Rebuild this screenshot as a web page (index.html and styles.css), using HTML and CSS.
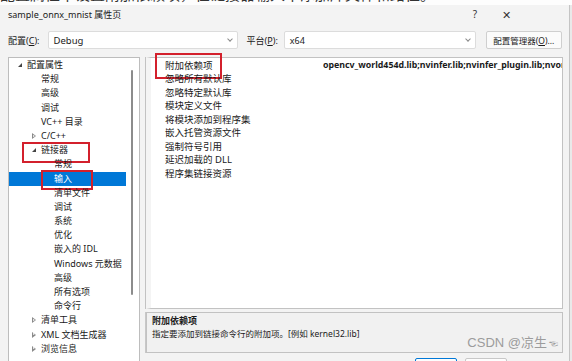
FILE: index.html
```html
<!DOCTYPE html>
<html lang="zh-CN">
<head>
  <meta charset="UTF-8">
  <title>sample_onnx_mnist 属性页</title>
  <link rel="stylesheet" href="styles.css">
</head>
<body>
  <div class="cut"><p>配置属性中设置附加依赖项，在链接器输入中添加库文件和路径。</p></div>

  <div class="dialog">
    <div class="titlebar">
      <span class="title">sample_onnx_mnist 属性页</span>
      <span class="ctrl help">?</span>
      <span class="ctrl close">✕</span>
    </div>

    <div class="config">
      <span class="label">配置(<u>C</u>):</span>
      <div class="select cfg">Debug<span class="chev"></span></div>
      <span class="label">平台(<u>P</u>):</span>
      <div class="select plat">x64<span class="chev"></span></div>
      <button class="mgr">配置管理器(<u>O</u>)...</button>
    </div>

    <div class="main">
      <div class="tree">
        <ul class="items">
          <li class="l0"><span class="arr open"></span>配置属性</li>
          <li class="l1"><span class="arr"></span>常规</li>
          <li class="l1"><span class="arr"></span>高级</li>
          <li class="l1"><span class="arr"></span>调试</li>
          <li class="l1"><span class="arr"></span>VC++ 目录</li>
          <li class="l1"><span class="arr shut"></span>C/C++</li>
          <li class="l1 mark"><span class="arr open"></span>链接器</li>
          <li class="l2"><span class="arr"></span>常规</li>
          <li class="l2 sel mark"><span class="arr"></span>输入</li>
          <li class="l2"><span class="arr"></span>清单文件</li>
          <li class="l2"><span class="arr"></span>调试</li>
          <li class="l2"><span class="arr"></span>系统</li>
          <li class="l2"><span class="arr"></span>优化</li>
          <li class="l2"><span class="arr"></span>嵌入的 IDL</li>
          <li class="l2"><span class="arr"></span>Windows 元数据</li>
          <li class="l2"><span class="arr"></span>高级</li>
          <li class="l2"><span class="arr"></span>所有选项</li>
          <li class="l2"><span class="arr"></span>命令行</li>
          <li class="l1"><span class="arr shut"></span>清单工具</li>
          <li class="l1"><span class="arr shut"></span>XML 文档生成器</li>
          <li class="l1"><span class="arr shut"></span>浏览信息</li>
        </ul>
        <div class="scroll"><div class="thumb"></div></div>
      </div>

      <div class="right">
        <div class="grid">
          <div class="prop mark"><span class="name">附加依赖项</span><span class="val">opencv_world454d.lib;nvinfer.lib;nvinfer_plugin.lib;nvonnxparser.lib;cudart.lib</span></div>
          <div class="prop"><span class="name">忽略所有默认库</span></div>
          <div class="prop"><span class="name">忽略特定默认库</span></div>
          <div class="prop"><span class="name">模块定义文件</span></div>
          <div class="prop"><span class="name">将模块添加到程序集</span></div>
          <div class="prop"><span class="name">嵌入托管资源文件</span></div>
          <div class="prop"><span class="name">强制符号引用</span></div>
          <div class="prop"><span class="name">延迟加载的 DLL</span></div>
          <div class="prop"><span class="name">程序集链接资源</span></div>
        </div>

        <div class="desc">
          <div class="desc-title">附加依赖项</div>
          <div class="desc-text">指定要添加到链接命令行的附加项。[例如 kernel32.lib]</div>
          <div class="watermark">CSDN @凉生<span class="wm-icon">☜</span></div>
        </div>

        <div class="buttons">
          <button class="btn ok" aria-label="确定"></button>
          <button class="btn" aria-label="取消"></button>
        </div>
      </div>
    </div>
  </div>
</body>
</html>
```

FILE: styles.css
```css
* {
  box-sizing: border-box;
}

body {
  margin: 0;
  background: #e9e9e9;
  font-family: "Noto Sans", "Noto Sans CJK SC", sans-serif;
  font-size: 9px;
  color: #1a1a1a;
  width: 572px;
  height: 361px;
  overflow: hidden;
}

.cut {
  height: 5px;
  overflow: hidden;
  background: #fdfdfd;
}

.cut p {
  margin: -13px 0 0 0;
  font-size: 15px;
  line-height: 15px;
  color: #333;
  white-space: nowrap;
}

.dialog {
  width: 570px;
  height: 356px;
  background: #f3f3f3;
  border-right: 1px solid #c4c4c4;
  overflow: hidden;
}

.titlebar {
  height: 18px;
  display: flex;
  align-items: center;
  padding-left: 8px;
}

.title {
  flex: 1;
  font-size: 9px;
}

.ctrl {
  width: 28px;
  text-align: center;
  font-size: 10px;
  color: #333;
}

.help {
  margin-right: 1px;
}

.close {
  margin-right: 47px;
  font-size: 11px;
  width: 32px;
}

u {
  text-decoration-thickness: 1px;
  text-underline-offset: 1px;
}

.config {
  display: flex;
  align-items: center;
  height: 18px;
  margin-top: 8px;
  padding-left: 8px;
}

.label {
  font-size: 9px;
}

.select {
  position: relative;
  height: 18px;
  background: #fff;
  border: 1px solid #dcdcdc;
  border-radius: 2px;
  display: flex;
  align-items: center;
  padding-left: 5px;
  font-size: 9.5px;
}

.cfg {
  width: 190px;
  margin-left: 8px;
  margin-right: 9px;
}

.plat {
  width: 192px;
  margin-left: 6px;
  margin-right: 10px;
  font-size: 9px;
}

.chev {
  position: absolute;
  right: 5px;
  top: 5px;
  width: 4px;
  height: 4px;
  border-right: 1px solid #8a8a8a;
  border-bottom: 1px solid #8a8a8a;
  transform: rotate(45deg);
}

.mgr {
  width: 76px;
  height: 18px;
  border: 1px solid #cfcfcf;
  border-radius: 2px;
  background: #fbfbfb;
  font-family: inherit;
  font-size: 8.5px;
  padding: 0;
  color: #1a1a1a;
}

.main {
  display: flex;
  margin-top: 8px;
  padding-left: 8px;
  gap: 6px;
}

.tree {
  width: 132px;
  height: 310px;
  background: #fff;
  border: 1px solid #bdbdbd;
  display: flex;
}

.items {
  list-style: none;
  margin: 0;
  padding: 0;
  width: 117px;
}

.items li {
  position: relative;
  height: 14.2px;
  line-height: 14.2px;
  display: flex;
  align-items: center;
  white-space: nowrap;
  font-size: 9px;
}

.l0 {
  padding-left: 8px;
}

.l1 {
  padding-left: 22px;
}

.l2 {
  padding-left: 35px;
}

.arr {
  width: 10px;
  height: 14px;
  flex: none;
  position: relative;
}

.arr.open::before {
  content: "";
  position: absolute;
  left: 1px;
  top: 5px;
  border-left: 4px solid transparent;
  border-bottom: 4px solid #444;
}

.arr.shut::before {
  content: "";
  position: absolute;
  left: 1px;
  top: 4px;
  border-top: 3px solid transparent;
  border-bottom: 3px solid transparent;
  border-left: 4px solid #8a8a8a;
}

.arr.shut::after {
  content: "";
  position: absolute;
  left: 1.5px;
  top: 5.5px;
  border-top: 1.5px solid transparent;
  border-bottom: 1.5px solid transparent;
  border-left: 2px solid #fff;
}

.sel {
  background: #0078d7;
  color: #fff;
}

.mark::after {
  content: "";
  position: absolute;
  border: 2px solid #d3202c;
  pointer-events: none;
}

.l1.mark::after {
  left: 13px;
  top: -1px;
  width: 64px;
  height: 17px;
}

.l2.sel.mark::after {
  left: 32px;
  top: -2px;
  width: 48px;
  height: 16px;
}

.scroll {
  flex: 1;
}

.thumb {
  margin-top: 12px;
  margin-left: 5px;
  width: 2px;
  height: 225px;
  background: #8c8c8c;
  border-radius: 1px;
}

.right {
  width: 417px;
  display: flex;
  flex-direction: column;
}

.grid {
  height: 252px;
  background: #fff;
  border: 1px solid #c2c2c2;
  border-left-width: 5px;
  border-left-color: #f4f4f4;
  box-shadow: -1px 0 0 #c2c2c2;
}

.prop {
  position: relative;
  height: 13.5px;
  display: flex;
  align-items: center;
  white-space: nowrap;
  font-size: 9.5px;
}

.name {
  width: 172px;
  padding-left: 14px;
  flex: none;
}

.val {
  flex: 1;
  min-width: 0;
  overflow: hidden;
  font-weight: bold;
  font-size: 8.8px;
}

.prop.mark::after {
  left: 4px;
  top: -5px;
  width: 63px;
  height: 22px;
}

.desc {
  position: relative;
  margin-top: 3px;
  height: 41px;
  border: 1px solid #c2c2c2;
  background: #f1f1f1;
  padding: 1px 5px;
  font-size: 9px;
  box-shadow: -1px 0 0 #c8c8c8;
}

.desc-title {
  font-weight: bold;
  height: 13px;
  line-height: 13px;
}

.desc-text {
  height: 14px;
  line-height: 14px;
  font-size: 8.5px;
}

.watermark {
  position: absolute;
  right: 4px;
  bottom: 0;
  font-family: "Liberation Sans", "Noto Sans CJK SC", sans-serif;
  font-size: 13px;
  color: #9c9c9c;
  line-height: 16px;
}

.wm-icon {
  font-size: 9px;
  margin-left: 2px;
}

.buttons {
  display: flex;
  gap: 8px;
  margin-top: 5px;
  padding-left: 269px;
}

.btn {
  width: 42px;
  height: 18px;
  background: #fdfdfd;
  border: 1px solid #c8c8c8;
  border-radius: 2px;
}

.btn.ok {
  border: 1px solid #0078d7;
}
```
